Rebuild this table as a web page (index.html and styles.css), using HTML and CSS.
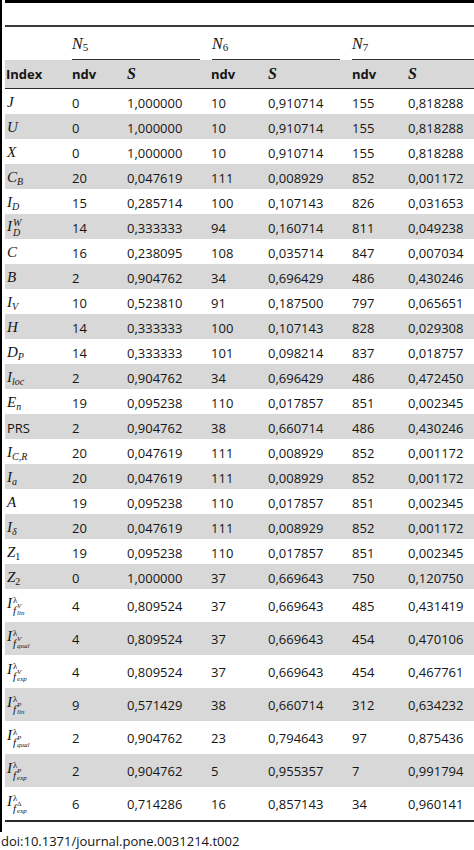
FILE: index.html
```html
<!DOCTYPE html>
<html>
<head>
<meta charset="utf-8">
<link rel="stylesheet" href="styles.css">
</head>
<body>
<div class="frame">
  <div class="topline"></div>
  <div class="rule"></div>
  <table class="t">
    <colgroup>
      <col class="c1"><col class="c2"><col class="c3"><col class="c4"><col class="c5"><col class="c6"><col class="c7">
    </colgroup>
    <thead>
      <tr class="grp">
        <th></th>
        <th colspan="2" class="g5"><div class="gl"><i>N</i><sub>5</sub></div></th>
        <th colspan="2" class="g6"><div class="gl"><i>N</i><sub>6</sub></div></th>
        <th colspan="2" class="g7"><div class="gl"><i>N</i><sub>7</sub></div></th>
      </tr>
      <tr class="hd">
        <th class="idx">Index</th>
        <th>ndv</th><th class="s"><i>S</i></th>
        <th>ndv</th><th class="s"><i>S</i></th>
        <th>ndv</th><th class="s"><i>S</i></th>
      </tr>
    </thead>
    <tbody>
      <tr class="r"><td class="lab"><i>J</i></td><td>0</td><td>1,000000</td><td>10</td><td>0,910714</td><td>155</td><td>0,818288</td></tr>
      <tr class="r g"><td class="lab"><i>U</i></td><td>0</td><td>1,000000</td><td>10</td><td>0,910714</td><td>155</td><td>0,818288</td></tr>
      <tr class="r"><td class="lab"><i>X</i></td><td>0</td><td>1,000000</td><td>10</td><td>0,910714</td><td>155</td><td>0,818288</td></tr>
      <tr class="r g"><td class="lab"><i>C</i><sub><i>B</i></sub></td><td>20</td><td>0,047619</td><td>111</td><td>0,008929</td><td>852</td><td>0,001172</td></tr>
      <tr class="r"><td class="lab"><i>I</i><sub><i>D</i></sub></td><td>15</td><td>0,285714</td><td>100</td><td>0,107143</td><td>826</td><td>0,031653</td></tr>
      <tr class="r g"><td class="lab"><i>I</i><span class="ss"><span class="su">W</span><span class="sb">D</span></span></td><td>14</td><td>0,333333</td><td>94</td><td>0,160714</td><td>811</td><td>0,049238</td></tr>
      <tr class="r"><td class="lab"><i>C</i></td><td>16</td><td>0,238095</td><td>108</td><td>0,035714</td><td>847</td><td>0,007034</td></tr>
      <tr class="r g"><td class="lab"><i>B</i></td><td>2</td><td>0,904762</td><td>34</td><td>0,696429</td><td>486</td><td>0,430246</td></tr>
      <tr class="r"><td class="lab"><i>I</i><sub><i>V</i></sub></td><td>10</td><td>0,523810</td><td>91</td><td>0,187500</td><td>797</td><td>0,065651</td></tr>
      <tr class="r g"><td class="lab"><i>H</i></td><td>14</td><td>0,333333</td><td>100</td><td>0,107143</td><td>828</td><td>0,029308</td></tr>
      <tr class="r"><td class="lab"><i>D</i><sub><i>P</i></sub></td><td>14</td><td>0,333333</td><td>101</td><td>0,098214</td><td>837</td><td>0,018757</td></tr>
      <tr class="r g"><td class="lab"><i>I</i><sub><i>loc</i></sub></td><td>2</td><td>0,904762</td><td>34</td><td>0,696429</td><td>486</td><td>0,472450</td></tr>
      <tr class="r"><td class="lab"><i>E</i><sub><i>n</i></sub></td><td>19</td><td>0,095238</td><td>110</td><td>0,017857</td><td>851</td><td>0,002345</td></tr>
      <tr class="r g"><td class="prs">PRS</td><td>2</td><td>0,904762</td><td>38</td><td>0,660714</td><td>486</td><td>0,430246</td></tr>
      <tr class="r"><td class="lab"><i>I</i><sub><i>C,R</i></sub></td><td>20</td><td>0,047619</td><td>111</td><td>0,008929</td><td>852</td><td>0,001172</td></tr>
      <tr class="r g"><td class="lab"><i>I</i><sub><i>a</i></sub></td><td>20</td><td>0,047619</td><td>111</td><td>0,008929</td><td>852</td><td>0,001172</td></tr>
      <tr class="r"><td class="lab"><i>A</i></td><td>19</td><td>0,095238</td><td>110</td><td>0,017857</td><td>851</td><td>0,002345</td></tr>
      <tr class="r g"><td class="lab"><i>I</i><sub><i>δ</i></sub></td><td>20</td><td>0,047619</td><td>111</td><td>0,008929</td><td>852</td><td>0,001172</td></tr>
      <tr class="r"><td class="lab"><i>Z</i><sub>1</sub></td><td>19</td><td>0,095238</td><td>110</td><td>0,017857</td><td>851</td><td>0,002345</td></tr>
      <tr class="r g"><td class="lab"><i>Z</i><sub>2</sub></td><td>0</td><td>1,000000</td><td>37</td><td>0,669643</td><td>750</td><td>0,120750</td></tr>
      <tr class="r tall"><td class="lab"><i>I</i><span class="ss2"><span class="lam">λ</span><span class="fs"><i>f</i><span class="ss3"><span class="su3">V</span><span class="sb3">lin</span></span></span></span></td><td>4</td><td>0,809524</td><td>37</td><td>0,669643</td><td>485</td><td>0,431419</td></tr>
      <tr class="r tall g"><td class="lab"><i>I</i><span class="ss2"><span class="lam">λ</span><span class="fs"><i>f</i><span class="ss3"><span class="su3">V</span><span class="sb3">qual</span></span></span></span></td><td>4</td><td>0,809524</td><td>37</td><td>0,669643</td><td>454</td><td>0,470106</td></tr>
      <tr class="r tall"><td class="lab"><i>I</i><span class="ss2"><span class="lam">λ</span><span class="fs"><i>f</i><span class="ss3"><span class="su3">V</span><span class="sb3">exp</span></span></span></span></td><td>4</td><td>0,809524</td><td>37</td><td>0,669643</td><td>454</td><td>0,467761</td></tr>
      <tr class="r tall g"><td class="lab"><i>I</i><span class="ss2"><span class="lam">λ</span><span class="fs"><i>f</i><span class="ss3"><span class="su3">P</span><span class="sb3">lin</span></span></span></span></td><td>9</td><td>0,571429</td><td>38</td><td>0,660714</td><td>312</td><td>0,634232</td></tr>
      <tr class="r tall"><td class="lab"><i>I</i><span class="ss2"><span class="lam">λ</span><span class="fs"><i>f</i><span class="ss3"><span class="su3">P</span><span class="sb3">qual</span></span></span></span></td><td>2</td><td>0,904762</td><td>23</td><td>0,794643</td><td>97</td><td>0,875436</td></tr>
      <tr class="r tall g"><td class="lab"><i>I</i><span class="ss2"><span class="lam">λ</span><span class="fs"><i>f</i><span class="ss3"><span class="su3">P</span><span class="sb3">exp</span></span></span></span></td><td>2</td><td>0,904762</td><td>5</td><td>0,955357</td><td>7</td><td>0,991794</td></tr>
      <tr class="r tall last"><td class="lab"><i>I</i><span class="ss2"><span class="lam">λ</span><span class="fs"><i>f</i><span class="ss3"><span class="su3 up">Δ</span><span class="sb3">exp</span></span></span></span></td><td>6</td><td>0,714286</td><td>16</td><td>0,857143</td><td>34</td><td>0,960141</td></tr>
    </tbody>
  </table>
</div>
<p class="doi">doi:10.1371/journal.pone.0031214.t002</p>
</body>
</html>
```

FILE: styles.css
```css
html, body {
  margin: 0;
  padding: 0;
  background: #fff;
}
body {
  width: 474px;
  font-family: "Open Sans", "Liberation Sans", sans-serif;
  font-size: 13px;
  color: #151515;
}
.frame {
  border-left: 2px solid #000;
  padding-left: 3px;
  padding-bottom: 10px;
}
.topline {
  height: 3px;
  background: #000;
}
.rule {
  height: 2px;
  margin-top: 22px;
  background: #3a3a3a;
}
.t {
  width: 469px;
  table-layout: fixed;
  border-collapse: collapse;
  border-spacing: 0;
}
.c1 { width: 65px; }
.c2 { width: 55px; }
.c3 { width: 84px; }
.c4 { width: 57px; }
.c5 { width: 84px; }
.c6 { width: 56px; }
.c7 { width: 68px; }
th, td {
  padding: 0 0 0 2px;
  text-align: left;
  white-space: nowrap;
}
.grp th {
  height: 33px;
  vertical-align: bottom;
  font-weight: normal;
}
.gl {
  font-family: "Liberation Serif", serif;
  font-size: 16px;
  line-height: 18px;
  padding-bottom: 6px;
  border-bottom: 1px solid #333;
}
.gl sub {
  font-style: normal;
  font-size: 11px;
  vertical-align: -2px;
  line-height: 0;
}
.g5 { padding-right: 9px; }
.g6 { padding-left: 3px; padding-right: 10px; }
.g7 { padding-right: 0; }
.hd th {
  height: 28px;
  background: #d8d8d8;
  font-weight: bold;
  font-size: 13px;
  border-bottom: 1px solid #2a2a2a;
}
.hd .s {
  font-family: "Liberation Serif", serif;
  font-size: 16px;
}
.hd .idx {
  padding-left: 1px;
}
.r td {
  height: 23px;
  vertical-align: middle;
  padding-top: 2px;
}
.r.tall td {
  height: 32px;
  padding-top: 1px;
}
.r.g td {
  background: #d8d8d8;
}
.r.last td {
  border-bottom: 2px solid #2a2a2a;
}
.lab {
  font-family: "Liberation Serif", serif;
  font-size: 15px;
  line-height: 15px;
}
.lab sub {
  font-size: 10px;
  line-height: 0;
  vertical-align: -3px;
}
.prs {
  font-size: 13px;
}
.ss {
  display: inline-flex;
  flex-direction: column;
  vertical-align: 5px;
  font-size: 10px;
  line-height: 10px;
  font-style: italic;
  margin-left: 1px;
}
.ss2 {
  display: inline-flex;
  flex-direction: column;
  vertical-align: 5px;
  font-size: 10px;
  line-height: 9px;
  margin-left: 1px;
}
.lam {
  font-style: normal;
  font-size: 9px;
  line-height: 10px;
}
.fs {
  display: inline-flex;
  align-items: flex-start;
  font-style: italic;
  font-size: 11px;
  line-height: 10px;
}
.ss3 {
  display: inline-flex;
  flex-direction: column;
  font-size: 7px;
  line-height: 7px;
  font-style: italic;
  margin-top: -2px;
  margin-left: 1px;
}
.su3.up {
  font-style: normal;
}
.doi {
  margin: 0;
  padding-left: 1px;
  font-size: 13px;
  line-height: 18px;
}
```
